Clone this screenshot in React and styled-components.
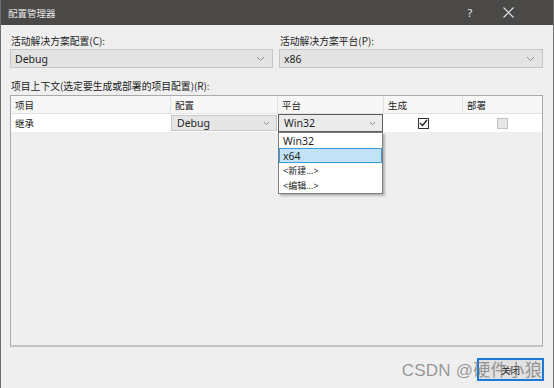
import React from 'react';
import styled, { createGlobalStyle } from 'styled-components';

const GlobalStyle = createGlobalStyle`
  html, body {
    margin: 0;
    padding: 0;
    background: #efefef;
  }
  body {
    font-family: "Noto Sans", "Noto Sans CJK SC", sans-serif;
    font-size: 10.5px;
    color: #1e1e1e;
  }
`;

const cjk = `"Noto Sans CJK SC", sans-serif`;

const Window = styled.div`
  width: 554px;
  height: 388px;
  box-sizing: border-box;
  display: flex;
  flex-direction: column;
  background: #efefef;
  border-left: 1px solid #707070;
  border-right: 1px solid #707070;
  overflow: hidden;
`;

const TitleBar = styled.div`
  height: 25px;
  flex: none;
  display: flex;
  align-items: center;
  justify-content: space-between;
  background: #4a4948;
  color: #e4e4e4;
  padding-left: 7px;
`;

const Title = styled.span`
  font-family: ${cjk};
  font-size: 9.5px;
`;

const TitleButtons = styled.div`
  display: flex;
  height: 100%;
  padding-right: 26px;
`;

const TitleBtn = styled.div`
  width: 38px;
  height: 100%;
  display: flex;
  align-items: center;
  justify-content: center;
  font-size: 11px;
  color: #e8e8e8;
`;

const Body = styled.div`
  flex: 1;
  display: flex;
  flex-direction: column;
  padding: 8px 10px 0 9px;
  min-height: 0;
`;

const TopGrid = styled.div`
  display: grid;
  grid-template-columns: 263px 1fr;
  gap: 6px;
`;

const Field = styled.div`
  display: flex;
  flex-direction: column;
`;

const Label = styled.div`
  height: 16px;
  line-height: 16px;
  font-family: ${cjk};
  font-size: 9.8px;
  color: #222;
  margin-top: ${(p) => p.$top || 0}px;
  margin-left: 1px;
`;

const Combo = styled.div`
  height: 19px;
  box-sizing: border-box;
  display: flex;
  align-items: center;
  justify-content: space-between;
  background: #e3e3e3;
  border: 1px solid ${(p) => (p.$focus ? '#5c5c5c' : '#c6c6c6')};
  padding: 0 7px 0 4px;
  font-size: 10.5px;
  color: #1e1e1e;
`;

const Chevron = () => (
  <svg width="9" height="6" viewBox="0 0 9 6">
    <path d="M1 1l3.5 3.5L8 1" fill="none" stroke="#8a8a8a" strokeWidth="1" />
  </svg>
);

const SmallChevron = () => (
  <svg width="7" height="5" viewBox="0 0 7 5">
    <path d="M1 1.2l2.5 2.3L6 1.2" fill="none" stroke="#8a8a8a" strokeWidth="1" />
  </svg>
);

const Table = styled.div`
  flex: 1;
  margin-top: 1px;
  box-sizing: border-box;
  border: 1px solid #a9a9a9;
  border-bottom: 2px solid #c3c3c9;
  background: #efefef;
  display: flex;
  flex-direction: column;
`;

const GridRow = styled.div`
  display: grid;
  grid-template-columns: 160px 107px 106px 79px 1fr;
  height: ${(p) => p.$h}px;
  background: ${(p) => p.$bg};
  border-bottom: ${(p) => (p.$line ? '1px solid #e2e2e2' : 'none')};
`;

const HeadCell = styled.div`
  display: flex;
  align-items: center;
  padding-left: 4px;
  border-right: 1px solid #e0e0e0;
  font-family: ${cjk};
  font-size: 9.5px;
  &:last-child {
    border-right: none;
  }
`;

const Cell = styled.div`
  position: relative;
  display: flex;
  align-items: center;
  justify-content: ${(p) => (p.$center ? 'center' : 'flex-start')};
  padding: ${(p) => (p.$pad ? '0 0 0 4px' : '0 1px 0 0')};
  font-family: ${cjk};
  font-size: 9.5px;
`;

const CellCombo = styled(Combo)`
  flex: 1;
  height: ${(p) => (p.$focus ? 18 : 16)}px;
  padding: 0 6px 0 5px;
  background: ${(p) => (p.$focus ? '#ebebeb' : '#e6e6e6')};
  border-width: ${(p) => (p.$focus ? '1.5px' : '1px')};
  font-family: "Noto Sans", sans-serif;
  font-size: 10.5px;
`;

const Check = styled.div`
  width: 11px;
  height: 11px;
  box-sizing: border-box;
  border: 1px solid ${(p) => (p.$disabled ? '#c2c2c2' : '#333')};
  background: ${(p) => (p.$disabled ? '#e6e6e6' : '#fff')};
  display: flex;
  align-items: center;
  justify-content: center;
`;

const DropList = styled.div`
  position: absolute;
  top: 100%;
  left: 0;
  width: 105px;
  box-sizing: border-box;
  background: #fff;
  border: 1px solid #7e7e7e;
  box-shadow: 2px 2px 2px rgba(0, 0, 0, 0.25);
  z-index: 5;
`;

const DropItem = styled.div`
  height: 15px;
  box-sizing: border-box;
  display: flex;
  align-items: center;
  padding-left: 3px;
  font-family: "Noto Sans", "Noto Sans CJK SC", sans-serif;
  font-size: ${(p) => (p.$small ? 9 : 10.5)}px;
  color: #1e1e1e;
  background: ${(p) => (p.$selected ? '#c3e2f5' : '#fff')};
  border: 1px solid ${(p) => (p.$selected ? '#3d9ad8' : 'transparent')};
`;

const Footer = styled.div`
  position: relative;
  height: 41px;
  flex: none;
  display: flex;
  justify-content: flex-end;
  align-items: flex-start;
  padding-top: 11px;
  box-sizing: border-box;
`;

const Button = styled.div`
  width: 67px;
  height: 23px;
  box-sizing: border-box;
  border: 2px solid #1c7ad6;
  background: #e1e1e1;
  display: flex;
  align-items: center;
  justify-content: center;
  font-family: ${cjk};
  font-size: 9.5px;
  color: #111;
  margin-right: -1px;
`;

const Watermark = styled.div`
  position: absolute;
  right: 1px;
  top: 9px;
  font-family: "Liberation Sans", "Noto Sans CJK SC", sans-serif;
  font-size: 17px;
  letter-spacing: 0.2px;
  color: rgba(120, 120, 120, 0.75);
  pointer-events: none;
  white-space: nowrap;
`;

export default function App() {
  return (
    <>
      <GlobalStyle />
      <Window>
        <TitleBar>
          <Title>配置管理器</Title>
          <TitleButtons>
            <TitleBtn>?</TitleBtn>
            <TitleBtn>
              <svg width="11" height="11" viewBox="0 0 11 11">
                <path d="M0.5 0.5l10 10M10.5 0.5l-10 10" stroke="#e8e8e8" strokeWidth="1.1" />
              </svg>
            </TitleBtn>
          </TitleButtons>
        </TitleBar>
        <Body>
          <TopGrid>
            <Field>
              <Label>活动解决方案配置(C):</Label>
              <Combo>
                <span>Debug</span>
                <Chevron />
              </Combo>
            </Field>
            <Field>
              <Label>活动解决方案平台(P):</Label>
              <Combo>
                <span>x86</span>
                <Chevron />
              </Combo>
            </Field>
          </TopGrid>
          <Label $top={10}>项目上下文(选定要生成或部署的项目配置)(R):</Label>
          <Table>
            <GridRow $h={17} $bg="#f7f7f7" $line>
              <HeadCell>项目</HeadCell>
              <HeadCell>配置</HeadCell>
              <HeadCell>平台</HeadCell>
              <HeadCell>生成</HeadCell>
              <HeadCell>部署</HeadCell>
            </GridRow>
            <GridRow $h={18} $bg="#fff">
              <Cell $pad>继承</Cell>
              <Cell>
                <CellCombo>
                  <span>Debug</span>
                  <SmallChevron />
                </CellCombo>
              </Cell>
              <Cell>
                <CellCombo $focus>
                  <span>Win32</span>
                  <SmallChevron />
                </CellCombo>
                <DropList>
                  <DropItem>Win32</DropItem>
                  <DropItem $selected>x64</DropItem>
                  <DropItem $small>&lt;新建...&gt;</DropItem>
                  <DropItem $small>&lt;编辑...&gt;</DropItem>
                </DropList>
              </Cell>
              <Cell $center>
                <Check>
                  <svg width="9" height="8" viewBox="0 0 9 8">
                    <path d="M1 4l2.5 2.5L8 1" fill="none" stroke="#222" strokeWidth="1.4" />
                  </svg>
                </Check>
              </Cell>
              <Cell $center>
                <Check $disabled />
              </Cell>
            </GridRow>
          </Table>
          <Footer>
            <Button>关闭</Button>
            <Watermark>CSDN @硬件小狼</Watermark>
          </Footer>
        </Body>
      </Window>
    </>
  );
}
